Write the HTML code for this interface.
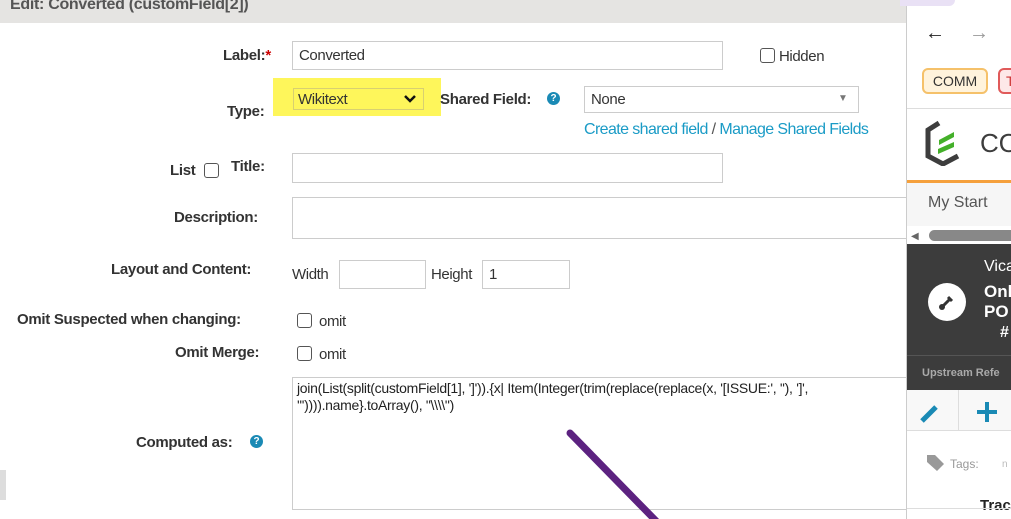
<!DOCTYPE html>
<html><head><meta charset="utf-8"><style>
*{margin:0;padding:0;box-sizing:border-box}
body{width:1011px;height:519px;overflow:hidden;background:#fff;font-family:"Liberation Sans",sans-serif;position:relative;color:#333}
.a{position:absolute;white-space:nowrap}
.lb{font-weight:bold;font-size:15px;color:#333;letter-spacing:-0.3px}
.in{position:absolute;border:1px solid #ccc;background:#fff}
.cb{position:absolute;width:15px;height:15px;border:1px solid #555;border-radius:3px;background:#fff}
.q{position:absolute;width:13px;height:13px;border-radius:50%;background:#1a8ab5;color:#fff;font-size:10px;font-weight:bold;text-align:center;line-height:13px}
.t{font-size:15px;color:#333;letter-spacing:-0.4px}
</style></head><body>
<div class="a" style="left:0;top:0;width:907px;height:23px;background:#e5e4e2"></div>
<div class="a lb" style="left:10px;top:-4px;color:#555;font-size:16px">Edit: Converted (customField[2])</div>

<div class="a lb" style="left:223px;top:47px">Label:<span style="color:#c00">*</span></div>
<div class="in" style="left:292px;top:41px;width:431px;height:29px"></div>
<div class="a t" style="left:299px;top:47px">Converted</div>
<div class="cb" style="left:760px;top:48px"></div>
<div class="a t" style="left:779px;top:48px">Hidden</div>

<div class="a" style="left:273px;top:78px;width:168px;height:38px;background:#fef65b"></div>
<div class="a" style="left:293px;top:88px;width:131px;height:22px;border:1px solid #d8d070"></div>
<div class="a t" style="left:298px;top:91px">Wikitext</div>
<svg class="a" style="left:404px;top:95px" width="12" height="8"><path d="M1 1L6 6L11 1" stroke="#111" stroke-width="2.5" fill="none"/></svg>
<div class="a lb" style="left:227px;top:103px">Type:</div>
<div class="a lb" style="left:440px;top:91px">Shared Field:</div>
<div class="q" style="left:547px;top:92px">?</div>
<div class="in" style="left:584px;top:86px;width:275px;height:27px"></div>
<div class="a t" style="left:591px;top:91px">None</div>
<div class="a" style="left:838px;top:93px;font-size:10px;color:#777">▼</div>
<div class="a t" style="left:584px;top:121px;color:#1a9bc6;font-size:16px;letter-spacing:-0.6px">Create shared field <span style="color:#555">/</span> Manage Shared Fields</div>

<div class="a lb" style="left:170px;top:162px">List</div>
<div class="cb" style="left:204px;top:163px"></div>
<div class="a lb" style="left:231px;top:158px">Title:</div>
<div class="in" style="left:292px;top:153px;width:431px;height:30px"></div>

<div class="a lb" style="left:174px;top:209px">Description:</div>
<div class="in" style="left:292px;top:197px;width:625px;height:42px"></div>

<div class="a lb" style="left:111px;top:261px">Layout and Content:</div>
<div class="a t" style="left:292px;top:266px">Width</div>
<div class="in" style="left:339px;top:260px;width:87px;height:29px"></div>
<div class="a t" style="left:431px;top:266px">Height</div>
<div class="in" style="left:482px;top:260px;width:88px;height:29px"></div>
<div class="a t" style="left:489px;top:266px">1</div>

<div class="a lb" style="left:17px;top:311px">Omit Suspected when changing:</div>
<div class="cb" style="left:297px;top:313px"></div>
<div class="a t" style="left:319px;top:313px">omit</div>
<div class="a lb" style="left:175px;top:344px">Omit Merge:</div>
<div class="cb" style="left:297px;top:346px"></div>
<div class="a t" style="left:319px;top:346px">omit</div>

<div class="in" style="left:292px;top:377px;width:625px;height:133px"></div>
<div class="a" style="left:297px;top:380px;font-size:14px;letter-spacing:-0.3px;line-height:17px;color:#222">join(List(split(customField[1], ']')).{x| Item(Integer(trim(replace(replace(x, '[ISSUE:', ''), ']',<br>''')))).name}.toArray(), "\\\\")</div>
<div class="a lb" style="left:136px;top:434px">Computed as:</div>
<div class="q" style="left:250px;top:435px">?</div>
<div class="a" style="left:0;top:470px;width:6px;height:30px;background:#ddd"></div>
<svg class="a" style="left:0;top:0" width="907" height="519"><line x1="570" y1="433" x2="660" y2="525" stroke="#5c2280" stroke-width="7" stroke-linecap="round"/></svg>

<!-- right panel -->
<div class="a" style="left:906px;top:0;width:105px;height:519px;background:#fff;border-left:1px solid #ccc"></div>
<div class="a" style="left:900px;top:0;width:55px;height:6px;background:#e9e1f5;border-radius:0 0 12px 0"></div>
<div class="a" style="left:925px;top:22px;font-size:20px;color:#222">←</div>
<div class="a" style="left:969px;top:22px;font-size:20px;color:#999">→</div>
<div class="a" style="left:922px;top:68px;width:66px;height:26px;border:2px solid #f5c16a;border-radius:6px;background:#fff3dc;font-size:14px;text-align:center;line-height:22px;color:#333">COMM</div>
<div class="a" style="left:998px;top:68px;width:30px;height:26px;border:2px solid #e05a5a;border-radius:6px;background:#fde8e8;font-size:14px;line-height:22px;padding-left:6px;color:#c33">T</div>
<div class="a" style="left:907px;top:108px;width:104px;height:1px;background:#ddd"></div>
<svg class="a" style="left:924px;top:120px" width="40" height="46"><path d="M15 3L4 10V36L19 44L34 36" stroke="#3d3d3d" stroke-width="5" fill="none"/><path d="M15 20L30 12V17L15 25Z M14 29L30 22V27L14 34Z" fill="#44b02a"/></svg>
<div class="a" style="left:980px;top:128px;font-size:26px;color:#3d3d3d">CO</div>
<div class="a" style="left:907px;top:180px;width:104px;height:3px;background:#f5a03c"></div>
<div class="a" style="left:907px;top:183px;width:104px;height:43px;background:#f6f6f6"></div>
<div class="a" style="left:928px;top:194px;font-size:16px;color:#555">My Start</div>
<div class="a" style="left:911px;top:231px;font-size:10px;color:#666">◀</div>
<div class="a" style="left:929px;top:230px;width:90px;height:11px;border-radius:6px;background:#888"></div>
<div class="a" style="left:907px;top:244px;width:104px;height:146px;background:#3c3c3c"></div>
<div class="a" style="left:907px;top:355px;width:104px;height:1px;background:#555"></div>
<div class="a" style="left:928px;top:283px;width:38px;height:38px;border-radius:50%;background:#fff"></div>
<svg class="a" style="left:936px;top:291px" width="22" height="22"><path d="M6 16L13 9 M12 6L16 10" stroke="#333" stroke-width="3"/><circle cx="6" cy="16" r="3" fill="#333"/></svg>
<div class="a" style="left:984px;top:258px;font-size:16px;color:#fff">Vica</div>
<div class="a" style="left:984px;top:282px;font-size:17px;font-weight:bold;color:#fff">Onl</div>
<div class="a" style="left:984px;top:302px;font-size:17px;font-weight:bold;color:#fff">PO</div>
<div class="a" style="left:1000px;top:324px;font-size:16px;font-weight:bold;color:#fff">#</div>
<div class="a" style="left:922px;top:367px;font-size:11px;font-weight:bold;color:#aaa">Upstream Refe</div>
<div class="a" style="left:907px;top:390px;width:104px;height:41px;background:#f8f8f8;border-bottom:1px solid #ddd"></div>
<div class="a" style="left:958px;top:390px;width:1px;height:41px;background:#ddd"></div>
<svg class="a" style="left:918px;top:401px" width="24" height="24"><path d="M4 20L18 6" stroke="#1a8ab5" stroke-width="5"/></svg>
<svg class="a" style="left:976px;top:401px" width="22" height="22"><path d="M11 1V21M1 11H21" stroke="#1a8ab5" stroke-width="4"/></svg>
<svg class="a" style="left:926px;top:454px" width="20" height="18"><path d="M1 1H9L18 10L11 17L1 8Z" fill="#999"/></svg>
<div class="a" style="left:950px;top:457px;font-size:12px;color:#999">Tags:</div>
<div class="a" style="left:1002px;top:459px;font-size:10px;color:#bbb">n</div>
<div class="a" style="left:980px;top:497px;font-size:15px;font-weight:bold;color:#222">Trac</div>
<div class="a" style="left:907px;top:508px;width:104px;height:1px;background:#ddd"></div>
</body></html>
